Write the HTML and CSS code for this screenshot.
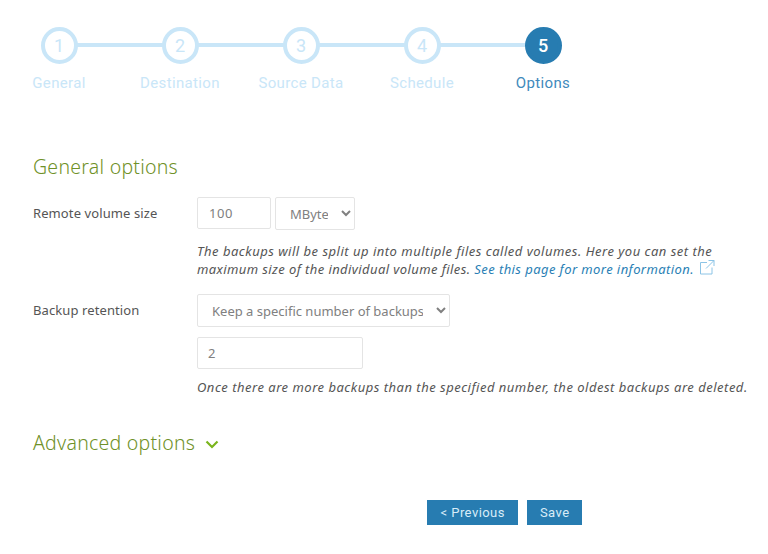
FILE: index.html
```html
<!DOCTYPE html>
<html>
<head>
  <title>Backup options</title>
  <meta charset="UTF-8" />
  <link rel="stylesheet" href="styles.css">
</head>
<body>
  <div class="steps">
    <div class="step"><div class="circle">1</div><div class="step-name">General</div></div>
    <div class="step"><div class="circle">2</div><div class="step-name">Destination</div></div>
    <div class="step"><div class="circle">3</div><div class="step-name">Source Data</div></div>
    <div class="step"><div class="circle">4</div><div class="step-name">Schedule</div></div>
    <div class="step active"><div class="circle">5</div><div class="step-name">Options</div></div>
  </div>

  <h2 class="general-title">General options</h2>

  <div class="row">
    <label class="row-label">Remote volume size</label>
    <div class="row-body">
      <div class="size-controls">
        <input class="field size-input" type="text" value="100">
        <select class="field size-unit">
          <option>MByte</option>
        </select>
      </div>
      <p class="help">The backups will be split up into multiple files called volumes. Here you can set the <span class="tight">maximum size of the individual volume files.</span> <a href="#">See this page for more information.</a>
        <svg class="ext-icon" width="16" height="15" viewBox="0 0 16 15" fill="none" stroke="#8cc4e6" stroke-width="1"><path d="M8 2.5H1.5V14H13V7.5"/><path d="M9.5 .5H15V6"/><path d="M15 .5L7 8.5"/></svg>
      </p>
    </div>
  </div>

  <div class="row retention">
    <label class="row-label">Backup retention</label>
    <div class="row-body">
      <select class="field retention-select">
        <option>Keep a specific number of backups</option>
      </select>
      <input class="field retention-input" type="text" value="2">
      <p class="help retention-help">Once there are more backups than the specified number, the oldest backups are deleted.</p>
    </div>
  </div>

  <h2 class="advanced-title">Advanced options
    <svg class="chevron" width="14" height="9" viewBox="0 0 14 9" fill="none" stroke="#7ab51d" stroke-width="2.2"><path d="M1.5 1.5L7 7L12.5 1.5"/></svg>
  </h2>

  <div class="buttons">
    <button class="btn">&lt; Previous</button>
    <button class="btn save">Save</button>
  </div>
</body>
</html>
```

FILE: styles.css
```css
body {
  margin: 0;
  background: #fff;
  color: #555;
  font-family: "Noto Sans", "Open Sans", sans-serif;
  font-size: 13px;
}

.steps {
  display: flex;
  margin-left: -1.5px;
  padding-top: 27px;
}

.step {
  position: relative;
  width: 121px;
  text-align: center;
}

.step::before {
  content: "";
  position: absolute;
  top: 16px;
  left: 60px;
  width: 121px;
  height: 4px;
  background: #c9e6f8;
}

.step:last-child::before {
  display: none;
}

.circle {
  position: relative;
  box-sizing: border-box;
  width: 37px;
  height: 37px;
  margin: 0 auto;
  border: 4px solid #c9e6f8;
  border-radius: 50%;
  background: #fff;
  color: #c9e6f8;
  font-family: Roboto, sans-serif;
  font-size: 18px;
  line-height: 29px;
}

.step-name {
  margin-top: 9px;
  color: #c9e6f8;
  font-family: Roboto, sans-serif;
  font-size: 15px;
  letter-spacing: .35px;
  line-height: 20px;
}

.step.active .circle {
  background: #277cb1;
  border-color: #277cb1;
  color: #fff;
  font-weight: 500;
}

.step.active .step-name {
  color: #3f8abc;
}

h2 {
  margin: 0 0 0 33px;
  color: #6f9128;
  font-family: "Noto Sans", sans-serif;
  font-weight: 300;
  font-size: 19.5px;
  letter-spacing: .25px;
  line-height: 28px;
}

.general-title {
  margin-top: 60px;
}

.row {
  display: flex;
  margin-top: 16px;
  padding-left: 33px;
}

.row-label {
  width: 164px;
  flex: none;
  padding-top: 7px;
  font-size: 13px;
  letter-spacing: .1px;
  line-height: 19px;
  color: #555;
}

.row-body {
  flex: 1;
  min-width: 0;
}

.size-controls {
  display: flex;
  gap: 4px;
}

.field {
  box-sizing: border-box;
  display: block;
  margin: 0;
  border: 1px solid #e4e4e4;
  border-radius: 2px;
  background: #fff;
  color: #808080;
  font-family: "Noto Sans", sans-serif;
  font-size: 13px;
}

.size-input {
  width: 74px;
  height: 32px;
  padding: 0 11px;
  letter-spacing: .6px;
}

.size-unit {
  width: 80px;
  height: 33px;
  padding: 0 10px;
}

.help {
  max-width: 555px;
  margin: 12px 0 0;
  font-size: 13px;
  font-style: italic;
  letter-spacing: .5px;
  line-height: 18px;
  color: #555;
}

.tight {
  letter-spacing: .41px;
}

.help a {
  color: #2a7fb5;
  letter-spacing: .42px;
  text-decoration: none;
}

.ext-icon {
  margin-left: 1px;
  vertical-align: -1px;
}

.retention {
  margin-top: 16px;
}

.retention-select {
  width: 253px;
  height: 33px;
  padding: 0 10px;
}

.retention-input {
  width: 166px;
  height: 32px;
  margin-top: 10px;
  padding: 0 10px;
}

.retention-help {
  margin-top: 9px;
}

.advanced-title {
  margin-top: 33px;
}

.chevron {
  margin-left: 4px;
  vertical-align: 1px;
}

.buttons {
  display: flex;
  gap: 9px;
  margin-top: 43px;
  padding-left: 427px;
}

.btn {
  height: 25px;
  padding: 0 13.5px;
  border: 0;
  background: #277cb1;
  color: #d8ecf8;
  font-family: Roboto, sans-serif;
  font-size: 13px;
  letter-spacing: .45px;
}

.save {
  padding: 0 12.5px;
}
```
